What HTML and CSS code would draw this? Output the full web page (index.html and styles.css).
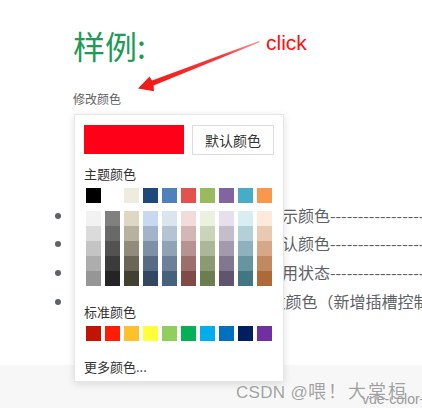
FILE: index.html
```html
<!DOCTYPE html>
<html lang="zh-CN">
<head>
<meta charset="utf-8">
<title>样例</title>
<link rel="stylesheet" href="styles.css">
</head>
<body>
<div class="page">
  <main class="content">
    <h1 class="title">样例:</h1>
    <div class="trigger">修改颜色</div>
    <ul class="props">
      <li>一、颜色值双向绑定，用于显示颜色------------------------------------------</li>
      <li>二、未选择任何颜色时使用默认颜色------------------------------------------</li>
      <li>三、开启后颜色选择器进入禁用状态------------------------------------------</li>
      <li>四、通过插槽自定义按钮 修改颜色（新增插槽控制）</li>
    </ul>
  </main>
  <footer class="footer"><span class="footer-link">vue-color-picker</span></footer>

  <div class="picker">
    <div class="picker-top">
      <div class="current"></div>
      <button class="default-btn">默认颜色</button>
    </div>
    <div class="picker-label first">主题颜色</div>
    <div class="theme-row">
      <span style="background:#000000"></span>
      <span style="background:#ffffff"></span>
      <span style="background:#eeece1"></span>
      <span style="background:#1e497b"></span>
      <span style="background:#4e81bb"></span>
      <span style="background:#e2534d"></span>
      <span style="background:#9aba60"></span>
      <span style="background:#8165a0"></span>
      <span style="background:#47acc5"></span>
      <span style="background:#f9974c"></span>
    </div>
    <div class="grid">
      <div class="col"><span style="background:#f2f2f2"></span><span style="background:#dbdbdb"></span><span style="background:#c4c4c4"></span><span style="background:#adadad"></span><span style="background:#969696"></span></div>
      <div class="col"><span style="background:#808080"></span><span style="background:#696969"></span><span style="background:#525252"></span><span style="background:#3b3b3b"></span><span style="background:#242424"></span></div>
      <div class="col"><span style="background:#ddd8c3"></span><span style="background:#b6b29f"></span><span style="background:#8f8c7b"></span><span style="background:#696657"></span><span style="background:#424033"></span></div>
      <div class="col"><span style="background:#c6d9f0"></span><span style="background:#a1b4cc"></span><span style="background:#7c90a8"></span><span style="background:#576c84"></span><span style="background:#324860"></span></div>
      <div class="col"><span style="background:#dae5f0"></span><span style="background:#b5c3d2"></span><span style="background:#90a2b5"></span><span style="background:#6c8198"></span><span style="background:#47607b"></span></div>
      <div class="col"><span style="background:#f2dbdb"></span><span style="background:#d5b6b6"></span><span style="background:#b89291"></span><span style="background:#9c6e6c"></span><span style="background:#7f4a47"></span></div>
      <div class="col"><span style="background:#eaf1de"></span><span style="background:#cad4ba"></span><span style="background:#abb796"></span><span style="background:#8b9a73"></span><span style="background:#6c7d4f"></span></div>
      <div class="col"><span style="background:#e6e0ec"></span><span style="background:#c4bdcc"></span><span style="background:#a39aad"></span><span style="background:#81778e"></span><span style="background:#60546f"></span></div>
      <div class="col"><span style="background:#d9eef3"></span><span style="background:#b3d0d7"></span><span style="background:#8eb2bb"></span><span style="background:#68949f"></span><span style="background:#437683"></span></div>
      <div class="col"><span style="background:#fee9da"></span><span style="background:#e9c9b1"></span><span style="background:#d5a988"></span><span style="background:#c18960"></span><span style="background:#ad6937"></span></div>
    </div>
    <div class="picker-label second">标准颜色</div>
    <div class="theme-row">
      <span style="background:#c21401"></span>
      <span style="background:#ff1e02"></span>
      <span style="background:#ffc12a"></span>
      <span style="background:#ffff3a"></span>
      <span style="background:#90cf5b"></span>
      <span style="background:#00b156"></span>
      <span style="background:#00aeee"></span>
      <span style="background:#0071c1"></span>
      <span style="background:#001f5e"></span>
      <span style="background:#7030a1"></span>
    </div>
    <div class="more">更多颜色...</div>
  </div>

  <svg class="annot" width="422" height="408" viewBox="0 0 422 408">
    <defs>
      <linearGradient id="ag" x1="259" y1="41" x2="140" y2="88" gradientUnits="userSpaceOnUse">
        <stop offset="0" stop-color="#ff9a9a"/>
        <stop offset="0.3" stop-color="#f53a3a"/>
        <stop offset="1" stop-color="#f01818"/>
      </linearGradient>
    </defs>
    <polygon points="259,41 152,80.6 149.5,76.5 138,88.5 154,91.2 153.6,85.6 259.6,42.2" fill="url(#ag)"/>
  </svg>
  <div class="click">click</div>
  <div class="watermark"><span class="wm-latin">CSDN @</span><span class="wm-cjk">喂！大棠桓</span></div>
</div>
</body>
</html>
```
FILE: styles.css
```css
html, body {
  margin: 0;
  padding: 0;
}
body {
  width: 422px;
  height: 408px;
  overflow: hidden;
  background: #ffffff;
  font-family: "Noto Sans CJK SC", "Noto Sans", sans-serif;
}
.page {
  position: relative;
  width: 422px;
  height: 408px;
  overflow: hidden;
  display: flex;
  flex-direction: column;
}
.content {
  flex: 1;
  padding-left: 73px;
}
.title {
  margin: 25px 0 0 0;
  font-size: 32px;
  line-height: 40px;
  font-weight: normal;
  color: #1f9a57;
}
.trigger {
  margin-top: 25.5px;
  font-size: 12px;
  line-height: 16px;
  color: #5e6166;
}
.props {
  margin: 94px 0 0 0;
  padding-left: 1px;
  font-size: 16px;
  line-height: 28.7px;
  color: #5e6166;
  white-space: nowrap;
}
.props li::marker {
  color: #5e6166;
}
.footer {
  height: 43px;
  background: #f7f7f7;
  padding-left: 362px;
  padding-top: 20px;
  box-sizing: border-box;
  white-space: nowrap;
}
.footer-link {
  font-family: "Liberation Sans", "Noto Sans CJK SC", sans-serif;
  font-size: 14px;
  line-height: 16px;
  color: #9a9a9a;
}

/* colour picker popup */
.picker {
  position: absolute;
  left: 74px;
  top: 114px;
  width: 210px;
  height: 268px;
  box-sizing: border-box;
  padding: 10px 9px 0 9px;
  background: #ffffff;
  border: 1px solid #e6e6e6;
  box-shadow: 0 2px 8px rgba(0, 0, 0, 0.12);
  color: #333333;
}
.picker-top {
  display: flex;
  gap: 8px;
  height: 30px;
}
.current {
  width: 100px;
  height: 29px;
  background: #ff0019;
}
.default-btn {
  width: 82px;
  height: 30px;
  margin: 0;
  padding: 0;
  box-sizing: border-box;
  border: 1px solid #dddddd;
  background: #ffffff;
  font-family: "Noto Sans CJK SC", sans-serif;
  font-size: 14px;
  color: #333333;
}
.picker-label {
  font-size: 13px;
  line-height: 13px;
  color: #333333;
}
.picker-label.first {
  margin-top: 12px;
}
.picker-label.second {
  margin-top: 19px;
}
.theme-row {
  display: flex;
  margin-top: 8px;
  height: 15px;
}
.theme-row span,
.col {
  width: 15px;
  margin: 0 2px;
}
.theme-row span {
  height: 15px;
}
.grid {
  display: flex;
  margin-top: 8px;
}
.col {
  display: flex;
  flex-direction: column;
}
.col span {
  height: 15px;
}
.more {
  margin-top: 19px;
  font-size: 13px;
  line-height: 13px;
  color: #333333;
}

/* annotations laid over the screenshot */
.annot {
  position: absolute;
  left: 0;
  top: 0;
  pointer-events: none;
}
.click {
  position: absolute;
  left: 266px;
  top: 31px;
  font-family: "Liberation Sans", sans-serif;
  font-size: 21px;
  line-height: 24px;
  color: #ff1010;
}
.watermark {
  position: absolute;
  left: 236px;
  top: 379px;
  line-height: 22px;
  color: rgba(130, 130, 130, 0.75);
  text-shadow: 0 0 1px rgba(255, 255, 255, 0.9);
  white-space: nowrap;
}
.wm-latin {
  font-family: "Liberation Sans", sans-serif;
  font-size: 17px;
  letter-spacing: 0.3px;
}
.wm-cjk {
  font-family: "Noto Sans CJK SC", sans-serif;
  font-size: 18px;
  letter-spacing: 2px;
}
```
